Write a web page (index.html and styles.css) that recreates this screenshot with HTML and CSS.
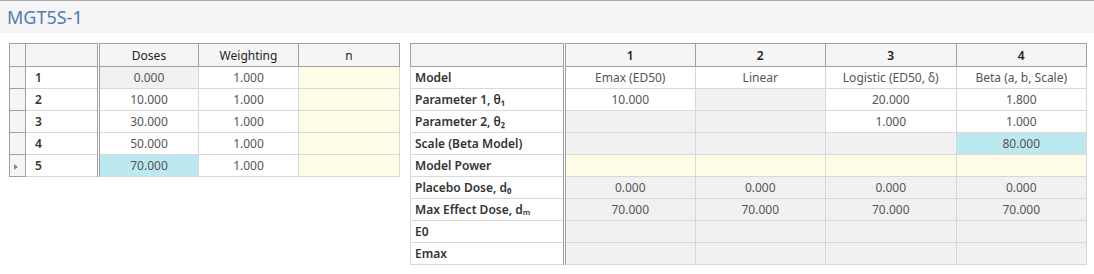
FILE: index.html
```
<!DOCTYPE html>
<html>
    <head>
        <title>MGT5S-1</title>
        <link rel="stylesheet" href="styles.css">
    </head>
    <body>
        <div class="titlebar">MGT5S-1</div>

        <div class="panes">
            <table class="grid doses">
                <colgroup>
                    <col class="c-ind">
                    <col class="c-num">
                    <col class="c-val">
                    <col class="c-val">
                    <col class="c-n">
                </colgroup>
                <tr class="head">
                    <th class="ind"></th>
                    <th class="num"></th>
                    <th>Doses</th>
                    <th>Weighting</th>
                    <th>n</th>
                </tr>
                <tr>
                    <td class="ind"></td>
                    <td class="num">1</td>
                    <td class="ro">0.000</td>
                    <td>1.000</td>
                    <td class="edit"></td>
                </tr>
                <tr>
                    <td class="ind"></td>
                    <td class="num">2</td>
                    <td>10.000</td>
                    <td>1.000</td>
                    <td class="edit"></td>
                </tr>
                <tr>
                    <td class="ind"></td>
                    <td class="num">3</td>
                    <td>30.000</td>
                    <td>1.000</td>
                    <td class="edit"></td>
                </tr>
                <tr>
                    <td class="ind"></td>
                    <td class="num">4</td>
                    <td>50.000</td>
                    <td>1.000</td>
                    <td class="edit"></td>
                </tr>
                <tr>
                    <td class="ind"><span class="arrow"></span></td>
                    <td class="num">5</td>
                    <td class="sel">70.000</td>
                    <td>1.000</td>
                    <td class="edit"></td>
                </tr>
            </table>

            <table class="grid models">
                <colgroup>
                    <col class="c-label">
                    <col class="c-model">
                    <col class="c-model">
                    <col class="c-model">
                    <col class="c-model">
                </colgroup>
                <tr class="head">
                    <th class="num"></th>
                    <th class="bold">1</th>
                    <th class="bold">2</th>
                    <th class="bold">3</th>
                    <th class="bold">4</th>
                </tr>
                <tr>
                    <td class="label">Model</td>
                    <td>Emax (ED50)</td>
                    <td>Linear</td>
                    <td>Logistic (ED50, δ)</td>
                    <td>Beta (a, b, Scale)</td>
                </tr>
                <tr>
                    <td class="label">Parameter 1, θ₁</td>
                    <td>10.000</td>
                    <td class="ro"></td>
                    <td>20.000</td>
                    <td>1.800</td>
                </tr>
                <tr>
                    <td class="label">Parameter 2, θ₂</td>
                    <td class="ro"></td>
                    <td class="ro"></td>
                    <td>1.000</td>
                    <td>1.000</td>
                </tr>
                <tr>
                    <td class="label">Scale (Beta Model)</td>
                    <td class="ro"></td>
                    <td class="ro"></td>
                    <td class="ro"></td>
                    <td class="sel">80.000</td>
                </tr>
                <tr>
                    <td class="label">Model Power</td>
                    <td class="edit"></td>
                    <td class="edit"></td>
                    <td class="edit"></td>
                    <td class="edit"></td>
                </tr>
                <tr>
                    <td class="label">Placebo Dose, d₀</td>
                    <td class="ro">0.000</td>
                    <td class="ro">0.000</td>
                    <td class="ro">0.000</td>
                    <td class="ro">0.000</td>
                </tr>
                <tr>
                    <td class="label">Max Effect Dose, dₘ</td>
                    <td class="ro">70.000</td>
                    <td class="ro">70.000</td>
                    <td class="ro">70.000</td>
                    <td class="ro">70.000</td>
                </tr>
                <tr>
                    <td class="label">E0</td>
                    <td class="ro"></td>
                    <td class="ro"></td>
                    <td class="ro"></td>
                    <td class="ro"></td>
                </tr>
                <tr>
                    <td class="label">Emax</td>
                    <td class="ro"></td>
                    <td class="ro"></td>
                    <td class="ro"></td>
                    <td class="ro"></td>
                </tr>
            </table>
        </div>
    </body>
</html>
```

FILE: styles.css
```
body {
    margin: 0;
    background: #fff;
    font-family: "Segoe UI", "Noto Sans", "Open Sans", sans-serif;
    font-size: 12px;
    color: #555;
}

.titlebar {
    height: 32px;
    border-top: 1px solid #a9a9a9;
    background: #f5f5f5;
    color: #4f7cb3;
    font-size: 18px;
    line-height: 32px;
    padding-left: 7px;
}

.panes {
    display: flex;
    align-items: flex-start;
    gap: 10px;
    padding: 10px 0 0 9px;
}

.grid {
    border-collapse: collapse;
    table-layout: fixed;
    border: 1px solid #a0a0a0;
}

.grid th,
.grid td {
    height: 21px;
    padding: 0 4px;
    border: 1px solid #d8d8d8;
    text-align: center;
    white-space: nowrap;
    overflow: hidden;
}

.grid .head th {
    height: 22px;
    background: #f5f5f5;
    border-color: #a0a0a0;
    font-weight: normal;
    color: #222;
}

.grid .head th.bold {
    font-weight: 600;
}

.doses .c-ind { width: 16px; }
.doses .c-num { width: 73px; }
.doses .c-val { width: 100px; }
.doses .c-n { width: 101px; }

.models .c-label { width: 154px; }
.models .c-model { width: 130.5px; }

.grid .ind {
    background: #f5f5f5;
    border-color: #a0a0a0;
    padding: 0;
    text-align: left;
}

.grid .num,
.grid .label {
    text-align: left;
    font-weight: 600;
    color: #333;
    border-right: 3px double #a0a0a0;
}

.grid .num {
    padding-left: 9px;
}

.grid .head th.num {
    border-right: 3px double #a0a0a0;
}

.arrow {
    display: inline-block;
    margin-left: 4px;
    border-left: 4px solid #888;
    border-top: 3px solid transparent;
    border-bottom: 3px solid transparent;
}

.ro {
    background: #f1f1f1;
}

.edit {
    background: #fffce8;
}

.sel {
    background: #bce9ef;
}
```
